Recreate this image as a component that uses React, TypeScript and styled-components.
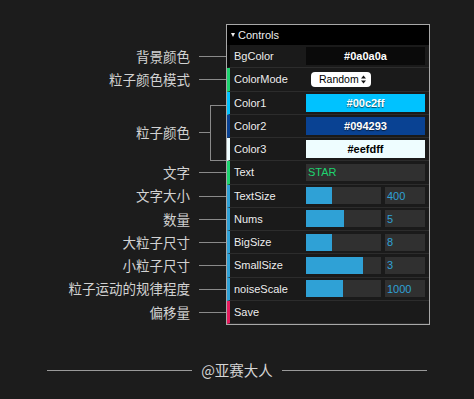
import React from 'react';
import styled, { createGlobalStyle } from 'styled-components';

const ROW = 23.25;
const TITLE = 20;

const GlobalStyle = createGlobalStyle`
  html, body {
    margin: 0;
    padding: 0;
    background: #1c1c1c;
  }
  body {
    width: 474px;
    height: 399px;
    overflow: hidden;
    font-family: 'Liberation Sans', Arial, sans-serif;
  }
`;

const Page = styled.div`
  width: 474px;
  height: 399px;
  display: flex;
  flex-direction: column;
`;

const Stage = styled.div`
  display: grid;
  grid-template-columns: 226px 204px;
  padding-top: 24px;
`;

const Notes = styled.div`
  display: flex;
  flex-direction: column;
  padding-top: ${TITLE + 1}px;
`;

const Note = styled.div<{ $span?: number; $inset?: boolean }>`
  box-sizing: border-box;
  height: ${(p) => ROW * (p.$span ?? 1)}px;
  padding: ${(p) => (p.$inset ? '13.5px 0 0.6px' : '0')};
  display: flex;
  align-items: center;
  justify-content: flex-end;
`;

const NoteText = styled.span`
  font-family: 'Noto Sans CJK SC', 'Noto Sans', sans-serif;
  font-size: 13.5px;
  line-height: 1;
  color: #d2d2d2;
  margin-right: 9px;
  white-space: nowrap;
`;

const Lead = styled.span<{ $w: number }>`
  width: ${(p) => p.$w}px;
  height: 1px;
  background: #8a8a8a;
`;

const Bracket = styled.span`
  box-sizing: border-box;
  align-self: stretch;
  width: 16px;
  border: 1px solid #8a8a8a;
  border-right: none;
`;

const Panel = styled.div`
  box-sizing: border-box;
  width: 204px;
  border: 1px solid #a8a8a8;
  background: #1a1a1a;
  display: flex;
  flex-direction: column;
`;

const Title = styled.div`
  height: ${TITLE}px;
  background: #000;
  color: #eee;
  font-size: 11px;
  display: flex;
  align-items: center;
  gap: 2px;
  padding-left: 4px;
`;

const Caret = styled.span`
  width: 0;
  height: 0;
  border-left: 2.5px solid transparent;
  border-right: 2.5px solid transparent;
  border-top: 4px solid #eee;
  margin-right: 1px;
`;

const Row = styled.div<{ $accent: string }>`
  box-sizing: border-box;
  height: ${ROW}px;
  border-left: 3px solid ${(p) => p.$accent};
  border-bottom: 1px solid #2c2c2c;
  display: grid;
  grid-template-columns: 72px 1fr;
  align-items: center;
  padding: 0 4px;
  font-size: 11px;
  color: #eee;
  text-shadow: 0 -1px 0 #111;
`;

const Label = styled.span`
  white-space: nowrap;
`;

const Swatch = styled.div<{ $bg: string; $dark?: boolean }>`
  height: 18px;
  background: ${(p) => p.$bg};
  color: ${(p) => (p.$dark ? '#000' : '#fff')};
  text-shadow: ${(p) => (p.$dark ? 'none' : 'rgba(0,0,0,0.6) 0 1px 1px')};
  font-weight: bold;
  font-size: 11px;
  display: flex;
  align-items: center;
  justify-content: center;
`;

const Select = styled.div`
  justify-self: start;
  box-sizing: border-box;
  margin-left: 5px;
  width: 60px;
  height: 15px;
  background: #fff;
  border-radius: 4px;
  color: #000;
  text-shadow: none;
  font-size: 10.5px;
  display: flex;
  align-items: center;
  justify-content: space-between;
  padding: 0 5px 0 8px;
`;

const Field = styled.div<{ $tone: string }>`
  box-sizing: border-box;
  height: 17px;
  background: #303030;
  color: ${(p) => p.$tone};
  text-shadow: none;
  font-size: 11px;
  display: flex;
  align-items: center;
  padding-left: 2px;
`;

const Pair = styled.div`
  display: grid;
  grid-template-columns: 75px 40px;
  gap: 4px;
`;

const Track = styled.div`
  height: 17px;
  background: #303030;
  display: flex;
`;

const Fill = styled.div`
  height: 100%;
  background: #2fa1d6;
`;

const Footer = styled.div`
  margin-top: 35px;
  height: 20px;
  padding: 0 47px;
  display: flex;
  align-items: center;
  gap: 9px;
`;

const Rule = styled.span`
  flex: 1;
  height: 1px;
  background: #9a9a9a;
`;

const Credit = styled.span`
  font-family: 'Noto Sans CJK SC', 'Noto Sans', sans-serif;
  font-size: 14.5px;
  line-height: 1;
  color: #d4d4d4;
`;

const STRING = '#1ed36f';
const NUMBER = '#2fa1d6';
const FUNC = '#e61d5f';

const colors = [
  { name: 'Color1', value: '#00c2ff' },
  { name: 'Color2', value: '#094293' },
  { name: 'Color3', value: '#eefdff', dark: true },
];

const sliders = [
  { name: 'TextSize', value: '400', ratio: 0.35 },
  { name: 'Nums', value: '5', ratio: 0.5 },
  { name: 'BigSize', value: '8', ratio: 0.35 },
  { name: 'SmallSize', value: '3', ratio: 0.76 },
  { name: 'noiseScale', value: '1000', ratio: 0.49 },
];

const notesBefore = ['背景颜色', '粒子颜色模式'];
const notesAfter = ['文字', '文字大小', '数量', '大粒子尺寸', '小粒子尺寸', '粒子运动的规律程度', '偏移量'];

function UpDown() {
  return (
    <svg width="5" height="9" viewBox="0 0 5 9">
      <path d="M2.5 0.5 L5 3.5 L0 3.5 Z" fill="#111" />
      <path d="M2.5 8.5 L5 5.5 L0 5.5 Z" fill="#111" />
    </svg>
  );
}

function App() {
  return (
    <Page>
      <GlobalStyle />
      <Stage>
        <Notes>
          {notesBefore.map((n) => (
            <Note key={n}>
              <NoteText>{n}</NoteText>
              <Lead $w={27} />
            </Note>
          ))}
          <Note $span={3} $inset>
            <NoteText>粒子颜色</NoteText>
            <Lead $w={11} />
            <Bracket />
          </Note>
          {notesAfter.map((n) => (
            <Note key={n}>
              <NoteText>{n}</NoteText>
              <Lead $w={27} />
            </Note>
          ))}
        </Notes>

        <Panel>
          <Title>
            <Caret />
            Controls
          </Title>
          <Row $accent="#0a0a0a">
            <Label>BgColor</Label>
            <Swatch $bg="#0a0a0a">#0a0a0a</Swatch>
          </Row>
          <Row $accent={STRING}>
            <Label>ColorMode</Label>
            <Select>
              Random
              <UpDown />
            </Select>
          </Row>
          {colors.map((c) => (
            <Row key={c.name} $accent={c.value}>
              <Label>{c.name}</Label>
              <Swatch $bg={c.value} $dark={c.dark}>
                {c.value}
              </Swatch>
            </Row>
          ))}
          <Row $accent={STRING}>
            <Label>Text</Label>
            <Field $tone={STRING}>STAR</Field>
          </Row>
          {sliders.map((s) => (
            <Row key={s.name} $accent={NUMBER}>
              <Label>{s.name}</Label>
              <Pair>
                <Track>
                  <Fill style={{ width: `${s.ratio * 100}%` }} />
                </Track>
                <Field $tone={NUMBER}>{s.value}</Field>
              </Pair>
            </Row>
          ))}
          <Row $accent={FUNC}>
            <Label>Save</Label>
          </Row>
        </Panel>
      </Stage>

      <Footer>
        <Rule />
        <Credit>@亚赛大人</Credit>
        <Rule />
      </Footer>
    </Page>
  );
}

export default App;
